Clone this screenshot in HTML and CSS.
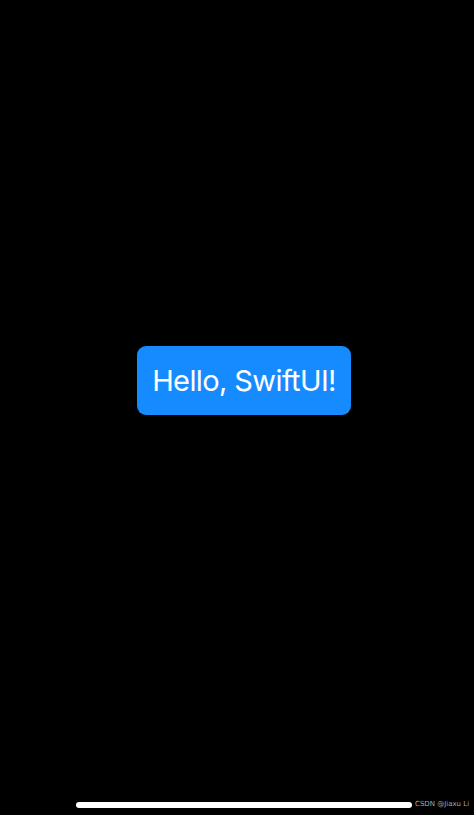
FILE: index.html
```html
<!DOCTYPE html>
<html lang="en">
<head>
    <meta charset="UTF-8">
    <meta name="viewport" content="width=device-width, initial-scale=1.0">
    <title>Hello, SwiftUI!</title>
    <link rel="stylesheet" href="styles.css">
</head>
<body>
    <div class="screen">
        <main class="stage">
            <button class="hello-btn" type="button">Hello, SwiftUI!</button>
        </main>

        <footer class="bottom-bar">
            <div class="home-indicator"></div>
            <span class="watermark">CSDN @Jiaxu Li</span>
        </footer>
    </div>
</body>
</html>
```

FILE: styles.css
```css
* {
    margin: 0;
    padding: 0;
    box-sizing: border-box;
}

body {
    background: #000;
    font-family: 'Inter', 'Roboto', sans-serif;
}

.screen {
    width: 474px;
    height: 815px;
    display: flex;
    flex-direction: column;
}

.stage {
    flex: 1;
    display: flex;
    align-items: center;
    justify-content: center;
    padding-left: 14px;
    padding-bottom: 34px;
}

.hello-btn {
    width: 214px;
    height: 69px;
    background: #168bff;
    color: #fff;
    border: none;
    border-radius: 9px;
    font-family: 'Inter', 'Roboto', sans-serif;
    font-size: 29px;
    letter-spacing: -0.6px;
    cursor: pointer;
}

.bottom-bar {
    height: 20px;
    display: flex;
    align-items: flex-start;
    padding-left: 76px;
}

.home-indicator {
    width: 336px;
    height: 6px;
    margin-top: 7px;
    background: #fff;
    border-radius: 3px;
}

.watermark {
    margin-left: 3px;
    margin-top: 5px;
    font-family: 'DejaVu Sans', sans-serif;
    font-size: 7px;
    color: #a8a8a8;
    white-space: nowrap;
}
```
